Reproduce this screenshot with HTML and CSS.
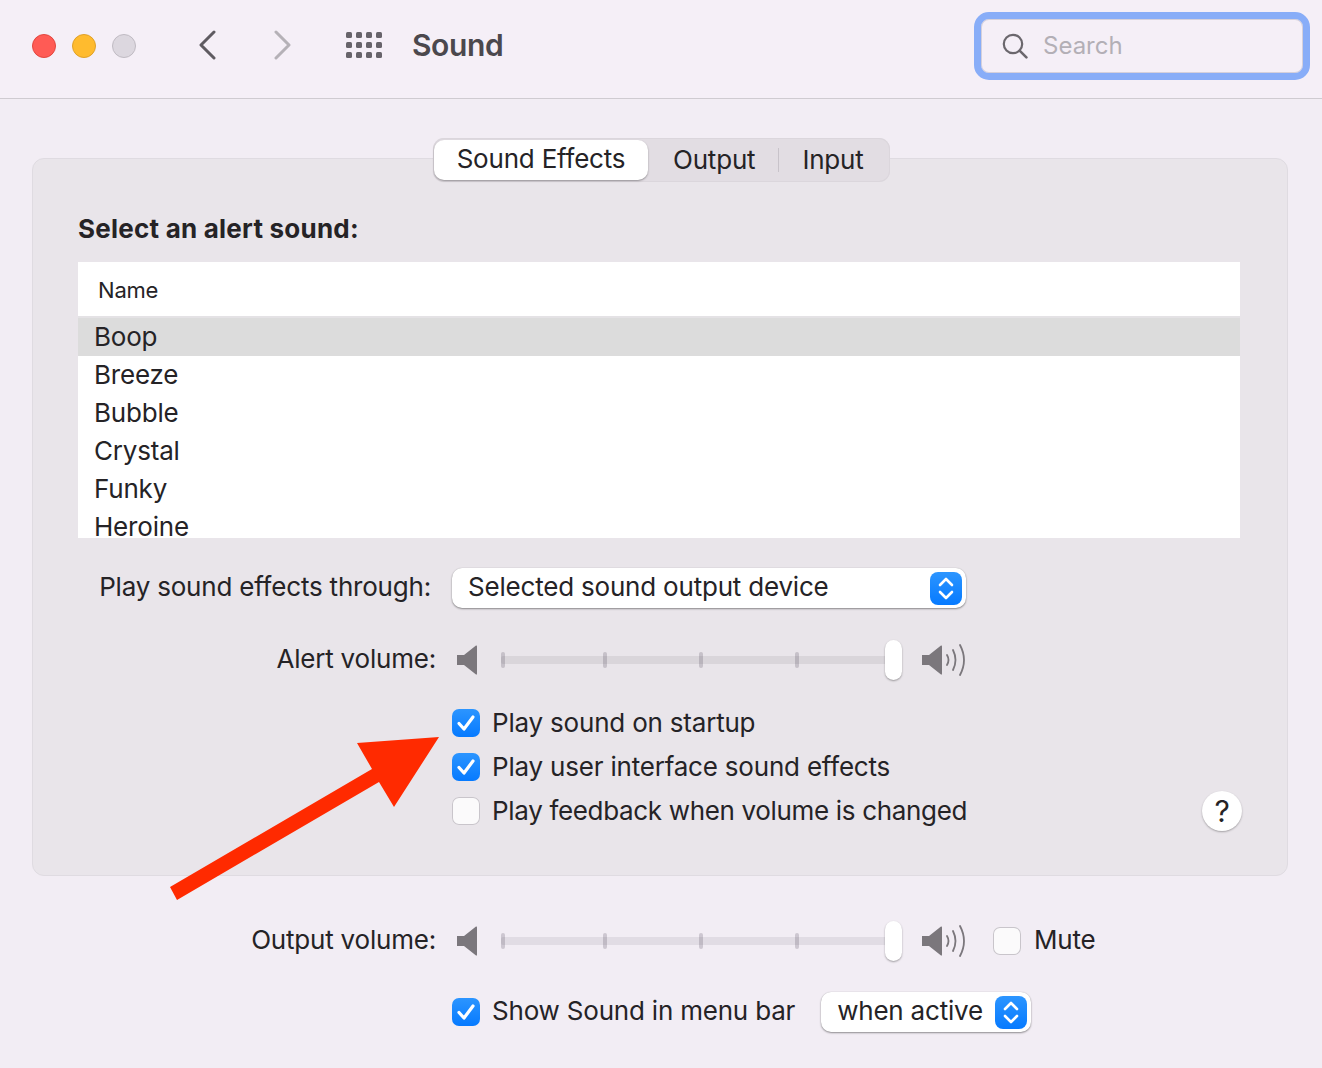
FILE: index.html
```html
<!DOCTYPE html>
<html lang="en">
<head>
<meta charset="utf-8">
<title>Sound</title>
<link rel="stylesheet" href="styles.css">
</head>
<body>
<header class="toolbar">
  <div class="lights">
    <span class="light red"></span>
    <span class="light yellow"></span>
    <span class="light grey"></span>
  </div>
  <svg class="chev" viewBox="0 0 18 30" width="18" height="30"><path d="M16 2 3 15l13 13" fill="none" stroke="#5f5b61" stroke-width="3" stroke-linecap="round" stroke-linejoin="round"/></svg>
  <svg class="chev next" viewBox="0 0 18 30" width="18" height="30"><path d="M2 2l13 13L2 28" fill="none" stroke="#b5b1b7" stroke-width="3" stroke-linecap="round" stroke-linejoin="round"/></svg>
  <div class="grid-icon">
    <i></i><i></i><i></i><i></i><i></i><i></i><i></i><i></i><i></i><i></i><i></i><i></i>
  </div>
  <h1 class="title">Sound</h1>
  <div class="search">
    <svg viewBox="0 0 26 26" width="26" height="26"><circle cx="11" cy="11" r="9.2" fill="none" stroke="#6b676d" stroke-width="2.2"/><path d="M17.6 17.6 24.4 24.4" stroke="#6b676d" stroke-width="2.6" stroke-linecap="round"/></svg>
    <span class="search-text">Search</span>
  </div>
</header>

<main class="page">
  <nav class="tabs">
    <span class="tab active">Sound Effects</span>
    <span class="tab output">Output</span>
    <span class="divider"></span>
    <span class="tab input">Input</span>
  </nav>
  <section class="panel">
    <h2 class="heading">Select an alert sound:</h2>
    <div class="list">
      <div class="list-head">Name</div>
      <div class="list-row selected">Boop</div>
      <div class="list-row">Breeze</div>
      <div class="list-row">Bubble</div>
      <div class="list-row">Crystal</div>
      <div class="list-row">Funky</div>
      <div class="list-row">Heroine</div>
    </div>
    <div class="row through">
      <label class="label short">Play sound effects through:</label>
      <div class="select wide">
        <span class="select-text">Selected sound output device</span>
        <span class="stepper"><svg viewBox="0 0 32 33" width="32" height="33"><path d="M10 13l6-6 6 6M10 20l6 6 6-6" fill="none" stroke="#fff" stroke-width="2.6" stroke-linecap="round" stroke-linejoin="round"/></svg></span>
      </div>
    </div>
    <div class="row alert">
      <label class="label">Alert volume:</label>
      <svg class="spk-low" viewBox="0 0 20 30" width="20" height="30"><path d="M0 10h7L19 .5q1-.5 1 1v27q0 1.500-1 1L7 20H0z" fill="#7b777c"/></svg>
      <div class="track">
        <i class="tick t1"></i><i class="tick t2"></i><i class="tick t3"></i><i class="tick t4"></i>
        <b class="thumb"></b>
      </div>
      <svg class="spk-high" viewBox="0 0 44 32" width="44" height="32"><path d="M0 11h7L19 1.500q1-.5 1 1v27q0 1.500-1 1L7 21H0z" fill="#7b777c"/><path d="M25 11q3 5 0 10M31 6q5 10 0 20M38 1q8 15 0 30" fill="none" stroke="#7b777c" stroke-width="1.800" stroke-linecap="round"/></svg>
    </div>
    <div class="checks">
      <div class="check-row"><span class="check on"><svg viewBox="0 0 28 28" width="28" height="28"><path d="M7 14.500l5 5.500 9-12" fill="none" stroke="#fff" stroke-width="3.200" stroke-linecap="round" stroke-linejoin="round"/></svg></span><span>Play sound on startup</span></div>
      <div class="check-row"><span class="check on"><svg viewBox="0 0 28 28" width="28" height="28"><path d="M7 14.500l5 5.500 9-12" fill="none" stroke="#fff" stroke-width="3.200" stroke-linecap="round" stroke-linejoin="round"/></svg></span><span>Play user interface sound effects</span></div>
      <div class="check-row last"><span class="check"></span><span class="tight">Play feedback when volume is changed</span><span class="help">?</span></div>
    </div>
  </section>

  <div class="row outvol">
    <label class="label">Output volume:</label>
    <svg class="spk-low" viewBox="0 0 20 30" width="20" height="30"><path d="M0 10h7L19 .5q1-.5 1 1v27q0 1.500-1 1L7 20H0z" fill="#7b777c"/></svg>
    <div class="track">
      <i class="tick t1"></i><i class="tick t2"></i><i class="tick t3"></i><i class="tick t4"></i>
      <b class="thumb"></b>
    </div>
    <svg class="spk-high" viewBox="0 0 44 32" width="44" height="32"><path d="M0 11h7L19 1.500q1-.5 1 1v27q0 1.500-1 1L7 21H0z" fill="#7b777c"/><path d="M25 11q3 5 0 10M31 6q5 10 0 20M38 1q8 15 0 30" fill="none" stroke="#7b777c" stroke-width="1.800" stroke-linecap="round"/></svg>
    <span class="check mute"></span><span class="mute-text">Mute</span>
  </div>
  <div class="row menubar">
    <span class="check on"><svg viewBox="0 0 28 28" width="28" height="28"><path d="M7 14.500l5 5.500 9-12" fill="none" stroke="#fff" stroke-width="3.200" stroke-linecap="round" stroke-linejoin="round"/></svg></span>
    <span class="menubar-text">Show Sound in menu bar</span>
    <div class="select narrow">
      <span class="select-text">when active</span>
      <span class="stepper"><svg viewBox="0 0 32 33" width="32" height="33"><path d="M10 13l6-6 6 6M10 20l6 6 6-6" fill="none" stroke="#fff" stroke-width="2.600" stroke-linecap="round" stroke-linejoin="round"/></svg></span>
    </div>
  </div>
</main>

<svg class="arrow" viewBox="0 0 1322 1068" width="1322" height="1068"><polygon points="170,887 372,769 357,743 439,737 394,807 379,782 177,900" fill="#ff2a00"/></svg>
</body>
</html>
```
FILE: styles.css
```css
* { box-sizing: border-box; }
html, body { margin: 0; padding: 0; }
body {
  width: 1322px;
  height: 1068px;
  overflow: hidden;
  position: relative;
  background: #f2edf4;
  color: #252326;
  font-family: Inter, "Liberation Sans", sans-serif;
  font-size: 26px;
  line-height: 30px;
  letter-spacing: -.2px;
}
.toolbar {
  height: 99px;
  background: #f5eff7;
  border-bottom: 1px solid #cfcbd1;
  display: flex;
  align-items: center;
  padding: 0 12px 0 32px;
}
.lights { display: flex; gap: 16px; margin-top: -6px; }
.light { width: 24px; height: 24px; border-radius: 50%; border: 1px solid; }
.red { background: #ff5b55; border-color: #e2463f; }
.yellow { background: #ffbb2e; border-color: #e0a128; }
.grey { background: #dcd7df; border-color: #c0bbc3; }
.chev { margin-left: 62px; margin-top: -8px; }
.chev.next { margin-left: 58px; }
.grid-icon {
  margin-left: 54px;
  margin-top: -8px;
  width: 36px;
  display: grid;
  grid-template-columns: repeat(4, 6px);
  grid-auto-rows: 6px;
  justify-content: space-between;
  row-gap: 4px;
}
.grid-icon i { background: #67636a; border-radius: 1.500px; }
.title {
  margin: -9px 0 0 30px;
  font-size: 30px;
  font-weight: 600;
  line-height: 36px;
  letter-spacing: -.4px;
  color: #4b484d;
}
.search {
  margin-left: auto;
  width: 336px;
  height: 68px;
  margin-top: -6px;
  border: 7px solid #88adf8;
  border-radius: 15px;
  display: flex;
  align-items: center;
  padding-left: 21px;
  box-shadow: inset 0 0 0 1px #d5d0db;
}
.search-text { margin-left: 15px; font-size: 24px; color: #b3afb6; letter-spacing: 0; }

.page { padding: 39px 34px 0 32px; display: flex; flex-direction: column; }
.tabs {
  align-self: flex-start;
  margin-left: 401px;
  margin-bottom: -24px;
  position: relative;
  z-index: 1;
  width: 457px;
  height: 44px;
  background: #e2dde3;
  border-radius: 11px;
  box-shadow: inset 0 0 0 1px #dbd6dc;
  display: flex;
  align-items: center;
  padding-left: 1px;
}
.tab { display: block; }
.tab.active {
  width: 214px;
  height: 40px;
  background: #fff;
  border-radius: 10px;
  box-shadow: 0 1px 2px rgba(0,0,0,.35);
  text-align: center;
  line-height: 38px;
}
.tab.output { margin-left: 25px; }
.divider { width: 1px; height: 24px; background: #c8c3ca; margin-left: 23px; }
.tab.input { margin-left: 23px; }

.panel {
  width: 1256px;
  height: 718px;
  background: #e9e5ea;
  border: 1px solid #dfdbe1;
  border-radius: 12px;
  padding: 55px 47px 0 45px;
}
.heading { margin: 0; font-size: 26px; font-weight: 700; line-height: 30px; color: #252326; letter-spacing: .23px; }
.list {
  margin-top: 18px;
  height: 276px;
  background: #fff;
  overflow: hidden;
}
.list-head {
  height: 56px;
  padding-left: 20px;
  font-size: 22px;
  line-height: 56px;
  border-bottom: 2px solid #e4e2e5;
}
.list-row { height: 38px; padding-left: 16px; line-height: 38px; }
.list-row.selected { background: #dcdcdc; }

.row { display: flex; align-items: center; height: 40px; }
.label { width: 358px; text-align: right; flex: none; margin-top: -2px; }
.label.short { padding-right: 5px; }
.through { margin-top: 30px; }
.select {
  margin-left: 16px;
  height: 40px;
  background: #fff;
  border-radius: 10px;
  box-shadow: 0 1px 2px rgba(0,0,0,.4), 0 0 1px rgba(0,0,0,.2);
  display: flex;
  align-items: center;
  justify-content: space-between;
  padding: 0 4px 0 16px;
}
.select-text { margin-top: -2px; }
.select.wide { width: 514px; }
.select.narrow { width: 210px; margin-left: 26px; }
.stepper {
  width: 32px;
  height: 33px;
  border-radius: 8px;
  background: linear-gradient(#2c95ff, #067aff);
  display: block;
}
.stepper svg { display: block; }
.alert { margin-top: 32px; }
.spk-low { margin-left: 21px; flex: none; }
.track {
  position: relative;
  flex: none;
  margin-left: 24px;
  width: 390px;
  height: 8px;
  background: rgba(60,50,70,.09);
  border-radius: 2px;
}
.tick { position: absolute; top: -4px; width: 4px; height: 16px; border-radius: 2px; background: rgba(60,50,70,.2); }
.t1 { left: 0; }
.t2 { left: 102px; }
.t3 { left: 198px; }
.t4 { left: 294px; }
.thumb {
  position: absolute;
  left: 384px;
  top: -16px;
  width: 17px;
  height: 40px;
  border-radius: 9px;
  background: #fff;
  box-shadow: 0 1px 2px rgba(0,0,0,.35);
}
.spk-high { margin-left: 31px; flex: none; }
.checks { margin-top: 29px; margin-left: 374px; display: flex; flex-direction: column; gap: 16px; }
.check-row { display: flex; align-items: center; height: 28px; gap: 12px; white-space: nowrap; }
.tight { letter-spacing: -.33px; }
.check {
  flex: none;
  display: block;
  width: 28px;
  height: 28px;
  border-radius: 7px;
  background: #fbfafb;
  box-shadow: inset 0 0 0 1px #c9c5cb;
}
.check.on { background: linear-gradient(#2c95ff, #067aff); box-shadow: none; }
.check svg { display: block; }
.help {
  margin-left: auto;
  margin-right: -2px;
  flex: none;
  width: 40px;
  height: 40px;
  border-radius: 50%;
  background: #fff;
  box-shadow: 0 1px 2px rgba(0,0,0,.3);
  text-align: center;
  line-height: 40px;
  font-size: 30px;
  font-weight: 400;
}
.outvol { margin-top: 45px; margin-left: 46px; }
.check.mute { margin-left: 27px; }
.mute-text { margin-left: 13px; margin-top: -2px; }
.menubar { margin-top: 31px; margin-left: 420px; }
.menubar-text { margin-left: 12px; margin-top: -2px; }
.arrow { position: absolute; left: 0; top: 0; pointer-events: none; }
```
